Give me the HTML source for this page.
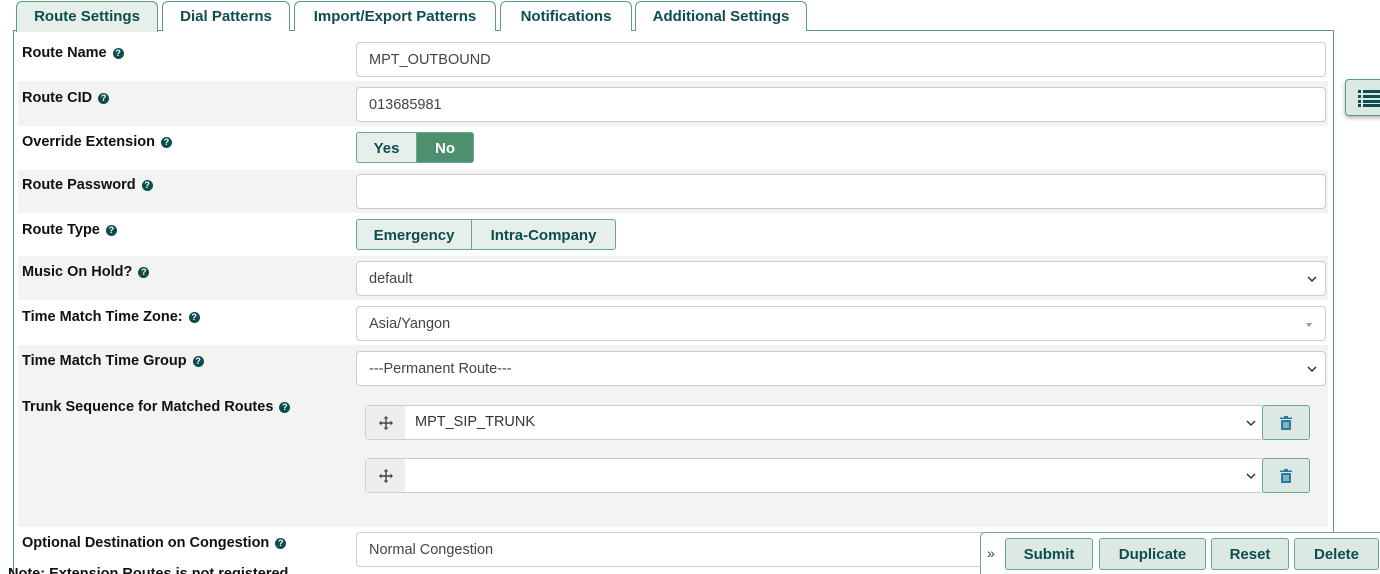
<!DOCTYPE html>
<html><head><meta charset="utf-8"><style>
*{box-sizing:border-box;margin:0;padding:0}
html,body{width:1380px;height:574px;overflow:hidden}
body{background:#fff;font-family:"Liberation Sans",sans-serif;position:relative;color:#111}
.abs{position:absolute}
.tab{position:absolute;top:1px;height:30px;border:1px solid #5a9c80;border-bottom:none;border-radius:6px 6px 0 0;background:#fff;color:#0d4d4d;font-weight:bold;font-size:15px;text-align:center;line-height:30px}
.tab.act{background:#e6efea;height:31px}
.frame{left:13px;top:30px;width:1321px;height:560px;border:1px solid #5a9c80;border-bottom:none}
.row{position:absolute;left:18px;width:1310px}
.g{background:#f3f3f3}
.lbl{position:absolute;left:22px;font-weight:bold;font-size:14.5px;color:#111}
.q{display:inline-block;width:11px;height:11px;border-radius:50%;background:#0d4d4d;color:#fff;font-size:9px;line-height:11px;text-align:center;vertical-align:1px;margin-left:6px}
.inp{position:absolute;left:356px;width:970px;height:35px;border:1px solid #ccc;border-radius:4px;background:#fff;font-size:14.5px;color:#444;line-height:35px;padding-left:12px}
.chev{position:absolute;right:8px;top:13px;width:10px;height:8px}
.btn{position:absolute;border:1px solid #6aa88a;background:#dce9e2;color:#0d4d4d;font-weight:bold;font-size:15px;text-align:center;border-radius:3px}
</style></head><body>
<div class="abs frame"></div>
<div class="tab act" style="left:16px;width:142px">Route Settings</div>
<div class="tab" style="left:162px;width:128px">Dial Patterns</div>
<div class="tab" style="left:294px;width:202px">Import/Export Patterns</div>
<div class="tab" style="left:500px;width:132px">Notifications</div>
<div class="tab" style="left:635px;width:172px">Additional Settings</div>

<div class="row g" style="top:81px;height:45px"></div>
<div class="row g" style="top:170px;height:43px"></div>
<div class="row g" style="top:256px;height:44px"></div>
<div class="row g" style="top:345px;height:182px"></div>

<div class="lbl" style="top:45px">Route Name<span class="q">?</span></div>
<div class="inp" style="top:42px">MPT_OUTBOUND</div>
<div class="lbl" style="top:90px">Route CID<span class="q">?</span></div>
<div class="inp" style="top:87px">013685981</div>
<div class="lbl" style="top:134px">Override Extension<span class="q">?</span></div>
<div class="btn" style="left:356px;top:132px;width:61px;height:31px;line-height:31px;background:#e6efea;border-radius:3px 0 0 3px">Yes</div>
<div class="btn" style="left:416px;top:132px;width:58px;height:31px;line-height:31px;background:#4d8f6e;color:#fff;border-radius:0 3px 3px 0">No</div>
<div class="lbl" style="top:177px">Route Password<span class="q">?</span></div>
<div class="inp" style="top:174px"></div>
<div class="lbl" style="top:222px">Route Type<span class="q">?</span></div>
<div class="btn" style="left:356px;top:219px;width:116px;height:31px;line-height:31px;background:#e6efea;border-radius:3px 0 0 3px">Emergency</div>
<div class="btn" style="left:471px;top:219px;width:145px;height:31px;line-height:31px;background:#e6efea;border-radius:0 3px 3px 0">Intra-Company</div>
<div class="lbl" style="top:264px">Music On Hold?<span class="q">?</span></div>
<div class="inp" style="top:261px">default<svg class="chev" viewBox="0 0 10 8"><path d="M1 2l4 4 4-4" stroke="#333" stroke-width="1.5" fill="none"/></svg></div>
<div class="lbl" style="top:309px">Time Match Time Zone:<span class="q">?</span></div>
<div class="inp" style="top:306px">Asia/Yangon<svg class="chev" style="right:12px;width:8px" viewBox="0 0 8 8"><path d="M1 3h6l-3 4z" fill="#999"/></svg></div>
<div class="lbl" style="top:353px">Time Match Time Group<span class="q">?</span></div>
<div class="inp" style="top:351px">---Permanent Route---<svg class="chev" viewBox="0 0 10 8"><path d="M1 2l4 4 4-4" stroke="#333" stroke-width="1.5" fill="none"/></svg></div>
<div class="lbl" style="top:399px">Trunk Sequence for Matched Routes<span class="q">?</span></div>

<div class="abs" style="left:365px;top:405px;width:900px;height:35px;border:1px solid #ccc;border-radius:4px;background:#fff;font-size:14.5px;color:#333;line-height:33px"><span style="display:inline-block;width:39px;height:33px;background:#eee;text-align:center;vertical-align:top"><svg width="14" height="14" viewBox="0 0 14 14" style="margin-top:10px"><path d="M7 0l2.5 2.5h-1.8v3.8h3.8V4.5L14 7l-2.5 2.5V7.7H7.7v3.8h1.8L7 14l-2.5-2.5h1.8V7.7H2.5v1.8L0 7l2.5-2.5v1.8h3.8V2.5H4.5z" fill="#444"/></svg></span><span style="padding-left:10px">MPT_SIP_TRUNK</span><svg class="chev" viewBox="0 0 10 8"><path d="M1 2l4 4 4-4" stroke="#333" stroke-width="1.5" fill="none"/></svg></div>
<div class="btn" style="left:1262px;top:405px;width:48px;height:35px"><svg width="12" height="14" viewBox="0 0 12 14" style="margin-top:10px"><path d="M4 0h4v1.5h4V3H0V1.5h4z" fill="#2a7aa0"/><rect x="1" y="4" width="10" height="10" rx="1" fill="#2a7aa0"/><path d="M4 6v6M6 6v6M8 6v6" stroke="#dce9e2" stroke-width="1"/></svg></div>
<div class="abs" style="left:365px;top:458px;width:900px;height:35px;border:1px solid #ccc;border-radius:4px;background:#fff;line-height:33px"><span style="display:inline-block;width:39px;height:33px;background:#eee;text-align:center;vertical-align:top"><svg width="14" height="14" viewBox="0 0 14 14" style="margin-top:10px"><path d="M7 0l2.5 2.5h-1.8v3.8h3.8V4.5L14 7l-2.5 2.5V7.7H7.7v3.8h1.8L7 14l-2.5-2.5h1.8V7.7H2.5v1.8L0 7l2.5-2.5v1.8h3.8V2.5H4.5z" fill="#444"/></svg></span><svg class="chev" viewBox="0 0 10 8"><path d="M1 2l4 4 4-4" stroke="#333" stroke-width="1.5" fill="none"/></svg></div>
<div class="btn" style="left:1262px;top:458px;width:48px;height:35px"><svg width="12" height="14" viewBox="0 0 12 14" style="margin-top:10px"><path d="M4 0h4v1.5h4V3H0V1.5h4z" fill="#2a7aa0"/><rect x="1" y="4" width="10" height="10" rx="1" fill="#2a7aa0"/><path d="M4 6v6M6 6v6M8 6v6" stroke="#dce9e2" stroke-width="1"/></svg></div>

<div class="lbl" style="top:535px">Optional Destination on Congestion<span class="q">?</span></div>
<div class="inp" style="top:532px;width:700px">Normal Congestion</div>
<div class="abs" style="left:8px;top:566px;font-weight:bold;font-size:14.5px">Note: Extension Routes is not registered</div>

<div class="abs" style="left:1345px;top:79px;width:40px;height:37px;border:1px solid #5a9c80;border-radius:4px;background:#dce9e2;box-shadow:0 2px 4px rgba(0,0,0,.3)">
<svg width="22" height="18" style="position:absolute;left:12px;top:9px"><g fill="#0d4d4d"><rect x="0" y="1" width="3" height="3"/><rect x="5" y="1" width="17" height="3"/><rect x="0" y="6" width="3" height="3"/><rect x="5" y="6" width="17" height="3"/><rect x="0" y="11" width="3" height="3"/><rect x="5" y="11" width="17" height="3"/><rect x="0" y="15" width="3" height="3"/><rect x="5" y="15" width="17" height="3"/></g></svg></div>

<div class="abs" style="left:980px;top:532px;width:410px;height:50px;border:1px solid #6aa88a;border-radius:5px;background:#fff"></div>
<div class="abs" style="left:987px;top:545px;font-size:14px;color:#0d4d4d">&raquo;</div>
<div class="btn" style="left:1005px;top:538px;width:88px;height:32px;line-height:32px">Submit</div>
<div class="btn" style="left:1099px;top:538px;width:107px;height:32px;line-height:32px">Duplicate</div>
<div class="btn" style="left:1211px;top:538px;width:78px;height:32px;line-height:32px">Reset</div>
<div class="btn" style="left:1294px;top:538px;width:85px;height:32px;line-height:32px">Delete</div>
</body></html>
